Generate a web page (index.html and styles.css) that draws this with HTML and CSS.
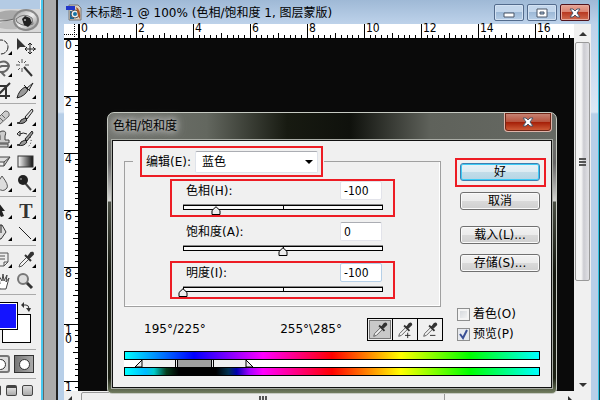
FILE: index.html
```html
<!DOCTYPE html>
<html lang="zh-CN">
  <head>
    <meta charset="utf-8" />
    <title>色相/饱和度</title>
    <link rel="stylesheet" href="styles.css">
  </head>

  <body>
    <svg class="defs" aria-hidden="true">
      <linearGradient id="fade"><stop offset="0" stop-color="#fff" /><stop offset="1" stop-color="#111" /></linearGradient>
      <linearGradient id="skin" x2="1" y2="1"><stop offset="0" stop-color="#999" /><stop offset=".5" stop-color="#eee" /><stop offset="1" stop-color="#888" /></linearGradient>
      <symbol id="dropper" viewBox="0 0 20 20">
        <path d="M3 17l1-3 7-7 2 2-7 7z" fill="#f4f4f4" stroke="#555" />
        <path d="M9 5l6 6M12 7l3-4q2-1 2 1l-4 4z" fill="#444" stroke="#333" stroke-width="2" />
      </symbol>
    </svg>

    <aside class="toolbox">
      <div class="toolbox-cap"></div>
      <svg class="eye" viewBox="0 0 41 23">
        <rect width="41" height="23" fill="#d8d8d8" />
        <path d="M0 3Q8 0 20 2L14 10Q8 12 0 10z" fill="#aaa" />
        <path d="M0 14Q8 10 14 12L17 20Q8 21 0 19z" fill="#bbb" />
        <path d="M0 12Q7 12 14 10" fill="none" stroke="#666" />
        <ellipse cx="26" cy="11" rx="12" ry="10" fill="url(#skin)" stroke="#888" stroke-width="2" />
        <path d="M16 10q8-7 16-1l1 6q-8 4-16-2z" fill="#ccc" stroke="#777" />
        <path d="M22 10l3-3 5 2 2 5-4 4-4-2z" fill="#222" />
        <circle cx="25" cy="11" r="1" fill="#bbb" />
      </svg>
      <div class="tools">
        <button class="more" aria-label="套索"><svg viewBox="0 0 20 20"><circle cx="9" cy="10" r="7" fill="none" stroke="#222" stroke-dasharray="5 1" /></svg></button>
        <button aria-label="移动"><svg viewBox="0 0 20 20"><path d="M1 1v12l3-3h6z" fill="#333" /><path d="M14 6v11M9 12h11M12 8l2-2 2 2M12 15l2 2 2-2M11 10l-2 2 2 2M17 10l2 2-2 2" fill="none" stroke="#222" /></svg></button>
        <button class="more" aria-label="磁性套索"><svg viewBox="0 0 20 20"><path d="M6 4q9-4 11 3-2 7-9 6-4-4 2-6h6M9 13l4 4" fill="none" stroke="#666" stroke-width="2" /></svg></button>
        <button aria-label="魔棒"><svg viewBox="0 0 20 20"><path d="M8 8l8 9" stroke="#333" stroke-width="2" /><path d="M6 0v4M6 9v4M0 6h4M9 6h4M2 2l2 2M10 2L8 4M2 11l2-2" stroke="#555" /></svg></button>
        <button aria-label="裁剪"><svg viewBox="0 0 20 20"><path d="M6 1v14h12M2 5h12v13M5 15L18 2" fill="none" stroke="#333" stroke-width="2" /></svg></button>
        <button class="more" aria-label="切片"><svg viewBox="0 0 20 20"><path d="M1 17Q3 9 9 6l3 3q-3 6-11 8z" fill="#999" stroke="#222" /><path d="M8 4l6 6M11 7l6-5-4 7z" fill="#ddd" stroke="#222" /></svg></button>
      </div>
      <div class="tools">
        <button class="more" aria-label="修复画笔"><svg viewBox="0 0 20 20"><path d="M3 13L13 3q5 0 4 5L7 17q-5 1-4-4z" fill="#ccc" stroke="#666" /><path d="M7 9l4 4M10 7l3 3" stroke="#666" /></svg></button>
        <button class="more" aria-label="画笔"><svg viewBox="0 0 20 20"><path d="M9 9l7-8 1 2-6 8z" fill="#ddd" stroke="#222" /><path d="M1 15q4 0 4-3l4-2 2 2q-3 5-10 3z" fill="#888" stroke="#222" /></svg></button>
        <button class="more" aria-label="图章"><svg viewBox="0 0 20 20"><path d="M8 10V6q-2-5 3-5 4 0 2 5v4h4v3H4v-3zM5 14h11v3H5z" fill="#ccc" stroke="#444" /></svg></button>
        <button class="more" aria-label="历史画笔"><svg viewBox="0 0 20 20"><path d="M9 9l7-8 1 2-6 8zM1 15q4 0 4-3l4-2 2 2q-3 5-10 3z" fill="#999" stroke="#222" /><path d="M4 4q3-2 7 0M4 1v5l-3-2z" fill="none" stroke="#222" /><path d="M14 7q3 5-2 10" fill="none" stroke="#222" stroke-dasharray="1 2" /></svg></button>
        <button class="more" aria-label="橡皮擦"><svg viewBox="0 0 20 20"><path d="M3 10l5-5h10l-6 9H5zM12 14v-4H3M12 10l6-5" fill="#ddd" stroke="#444" /></svg></button>
        <button class="more" aria-label="渐变"><svg viewBox="0 0 20 20"><rect x="2" y="4" width="15" height="11" fill="url(#fade)" stroke="#333" /></svg></button>
        <button class="more" aria-label="模糊"><svg viewBox="0 0 20 20"><path d="M10 2q7 9 5 12-4 5-9 0-2-4 4-12z" fill="#ddd" stroke="#555" /></svg></button>
        <button class="more" aria-label="减淡"><svg viewBox="0 0 20 20"><path d="M9 9l6 7" stroke="#444" stroke-width="2" /><circle cx="7" cy="6" r="5" fill="#222" /><circle cx="5" cy="5" r="1" fill="#888" /></svg></button>
      </div>
      <div class="tools">
        <button class="more" aria-label="路径选择"><svg viewBox="0 0 20 20"><path d="M6 1l7 9h-3l2 5-3 1-3-5z" fill="#222" /></svg></button>
        <button class="more type-tool" aria-label="文字">T</button>
        <button class="more" aria-label="钢笔"><svg viewBox="0 0 20 20"><path d="M7 2h3l4 7-5 7H8L5 9z" fill="#ddd" stroke="#333" /><path d="M9 2v8" stroke="#222" /></svg></button>
        <button class="more" aria-label="直线"><svg viewBox="0 0 20 20"><path d="M3 4l12 12" stroke="#222" /></svg></button>
      </div>
      <div class="tools">
        <button class="more" aria-label="注释"><svg viewBox="0 0 20 20"><path d="M4 3h12v9l-4 4H4zM16 12h-4v4M6 6h7M6 9h7" fill="#eee" stroke="#555" /></svg></button>
        <button class="more" aria-label="吸管"><svg><use href="#dropper" /></svg></button>
        <button aria-label="抓手"><svg viewBox="0 0 20 20"><path d="M5 10l3 7h6l3-11-3 4 1-7-3 6-1-7-1 7-3-5 1 8z" fill="#fff" stroke="#444" /></svg></button>
        <button aria-label="缩放"><svg viewBox="0 0 20 20"><path d="M10 10l6 6" stroke="#333" stroke-width="3" /><circle cx="7" cy="7" r="5" fill="#ddd" stroke="#777" stroke-width="2" /></svg></button>
      </div>
      <div class="swatches">
        <span class="back-color"></span>
        <span class="fore-color"></span>
        <svg class="swap" viewBox="0 0 10 10"><path d="M2 3h3q3 0 3 4" fill="none" stroke="#333" /><path d="M0 3l3-3v6zM5 6h5L8 10z" fill="#333" /></svg>
      </div>
      <div class="modes">
        <button class="mode on" aria-label="标准模式"><i></i></button>
        <button class="mode quick" aria-label="快速蒙版"><i></i></button>
      </div>
      <div class="screens">
        <button class="screen on" aria-label="标准屏幕"></button>
        <button class="screen bar" aria-label="带菜单栏全屏"></button>
        <button class="screen" aria-label="全屏"></button>
      </div>
    </aside>

    <main class="document">
      <header class="doc-title">
        <svg class="doc-icon" viewBox="0 0 17 17">
          <path d="M3 1h9l3 3v12H3z" fill="#ddd0c0" stroke="#777" />
          <path d="M4 7h4v8H4z" fill="#19699b" />
          <circle cx="9" cy="10" r="4" fill="#eee" stroke="#555" />
          <circle cx="9" cy="10" r="2" fill="#1573a5" />
          <path d="M10 3q5 2 4 12l-2-3z" fill="#a65729" />
          <path d="M0 2h9v4H0z" fill="#2136c9" />
        </svg>
        <h1>未标题-1 @ 100% (色相/饱和度 1, 图层蒙版)</h1>
        <button class="win-btn" aria-label="最小化"><svg viewBox="0 0 12 10"><path d="M1 5h10v4H1z" fill="#fff" stroke="#4b5769" /></svg></button>
        <button class="win-btn" aria-label="最大化"><svg viewBox="0 0 12 10"><path d="M1 1h10v8H1zM4 4v2h4V4z" fill="#fff" fill-rule="evenodd" stroke="#4b5769" /></svg></button>
        <button class="win-btn close" aria-label="关闭"><svg viewBox="0 0 12 10"><path d="M1 1h3l2 2 2-2h3L8 5l3 4H8L6 7 4 9H1l3-4z" fill="#fff" stroke="#4b5769" /></svg></button>
      </header>
      <div class="workspace">
        <div class="corner"></div>
        <div class="ruler across" data-units="9"></div>
        <div class="ruler down" data-units="7"></div>
        <div class="canvas"></div>
        <div class="scroll-v">
          <span class="arrow up"></span>
          <div class="thumb"><i></i><i></i><i></i></div>
          <span class="arrow down-arrow"></span>
        </div>
        <div class="scroll-h">
          <span class="arrow left"></span>
          <div class="thumb"><i></i><i></i><i></i></div>
          <span class="arrow right"></span>
        </div>
      </div>
    </main>

    <form class="dialog">
      <header class="dialog-title">
        <h2>色相/饱和度</h2>
        <button type="button" class="dialog-close" aria-label="关闭"><svg viewBox="0 0 12 10"><path d="M1 1h3l2 2 2-2h3L8 5l3 4H8L6 7 4 9H1l3-4z" fill="#fff" stroke="#4b5769" /></svg></button>
      </header>
      <div class="dialog-body">
        <fieldset>
          <legend>
            <span class="edit marked">
              <label for="channel">编辑(E):</label>
              <select id="channel"><option>蓝色</option></select>
            </span>
          </legend>
          <div class="row marked">
            <label for="hue">色相(H):</label>
            <input type="text" id="hue" value="-100" />
            <input type="range" aria-label="色相" min="-150" max="150" value="-100" />
          </div>
          <div class="row">
            <label for="sat">饱和度(A):</label>
            <input type="text" id="sat" value="0" />
            <input type="range" aria-label="饱和度" min="-100" max="100" value="0" />
          </div>
          <div class="row marked">
            <label for="light">明度(I):</label>
            <input type="text" id="light" class="focus" value="-100" />
            <input type="range" aria-label="明度" min="-100" max="100" value="-100" />
          </div>
        </fieldset>

        <div class="actions">
          <div class="ok marked"><button type="button" class="btn default">好</button></div>
          <button type="button" class="btn">取消</button>
          <button type="button" class="btn load">载入(L)...</button>
          <button type="button" class="btn">存储(S)...</button>
        </div>

        <div class="readout">
          <span>195°/225°</span>
          <span>255°\285°</span>
          <div class="droppers">
            <button type="button" class="on" aria-label="吸管"><svg><use href="#dropper" /></svg></button>
            <button type="button" aria-label="添加到取样"><svg viewBox="0 0 20 20"><use href="#dropper" /><path d="M10 16h6M13 13v6" stroke="#222" /></svg></button>
            <button type="button" aria-label="从取样减去"><svg viewBox="0 0 20 20"><use href="#dropper" /><path d="M10 16h6" stroke="#222" /></svg></button>
          </div>
        </div>

        <div class="checks">
          <label><input type="checkbox" />着色(O)</label>
          <label><input type="checkbox" checked />预览(P)</label>
        </div>

        <div class="spectrum">
          <div class="hues"></div>
          <svg class="handles" viewBox="0 0 130 7">
            <path d="M19 0h103v7H19z" fill="#f0f0f0" />
            <path d="M54 0h33v7H54z" fill="#a0a0a0" />
            <path d="M11 7l7-7v7zM122 0l7 7h-7z" fill="#eee" stroke="#000" />
            <path d="M51 0h1v7h-1zM53 0h1v7h-1zM87 0h1v7h-1zM89 0h1v7h-1z" />
          </svg>
          <div class="hues shifted"></div>
        </div>
      </div>
    </form>

    <script>
      // ten ticks to a unit, each unit stands for 2 cm
      document.querySelectorAll(".ruler").forEach((ruler) => {
        for (let i = 0; i < ruler.dataset.units; i++) {
          const unit = document.createElement("div");
          unit.className = "unit";
          for (let t = 0; t < 10; t++) {
            unit.appendChild(document.createElement("i"));
          }
          const label = document.createElement("span");
          label.textContent = i * 2;
          unit.appendChild(label);
          ruler.appendChild(unit);
        }
      });
    </script>
  </body>
</html>
```
FILE: styles.css
```css
* {
  box-sizing: border-box;
}
body {
  margin: 0;
  height: 100vh;
  display: flex;
  position: relative;
  overflow: hidden;
  background: #ababab;
  color: #000;
  font: 12px/16px "DejaVu Sans", "Noto Sans CJK SC", sans-serif;
}
button,
input,
select {
  font: inherit;
  color: inherit;
  margin: 0;
  padding: 0;
}
svg {
  display: block;
}
.defs {
  position: absolute;
  width: 0;
  height: 0;
}

/* toolbox */
.toolbox {
  flex: none;
  width: 44px;
  margin-right: 12px;
  overflow: hidden;
  background: #efefef;
  border-right: 1px solid #666;
  box-shadow: inset -2px 0 #45c8f0;
}
.toolbox-cap {
  height: 9px;
  margin-right: 3px;
  background: #b4cbe4;
}
.eye {
  width: 41px;
  height: 24px;
  border-bottom: 1px solid #999;
}
.tools {
  display: grid;
  grid-template-columns: 24px 24px;
  grid-auto-rows: 22px;
  margin: 3px 7px 0 -10px;
  padding-bottom: 1px;
  border-bottom: 1px solid #aaa;
}
.tools button {
  position: relative;
  border: 0;
  background: none;
}
.tools svg {
  width: 20px;
  height: 20px;
  margin: 1px 2px;
}
.tools .more::after {
  content: "";
  position: absolute;
  right: 2px;
  bottom: 3px;
  border: 2px solid #000;
  border-top-color: transparent;
  border-left-color: transparent;
}
.tools .type-tool {
  font: bold 20px/20px "Liberation Serif", serif;
  color: #333;
}
.swatches {
  position: relative;
  height: 55px;
  margin-right: 7px;
  border-bottom: 1px solid #aaa;
}
.fore-color,
.back-color {
  position: absolute;
  border: 1px solid #000;
}
.fore-color {
  left: -11px;
  top: 7px;
  width: 29px;
  height: 28px;
  background: #1414ff;
  box-shadow: inset 0 0 0 1px #fff;
}
.back-color {
  left: 2px;
  top: 19px;
  width: 29px;
  height: 29px;
  background: #fff;
}
.swap {
  position: absolute;
  left: 21px;
  top: 7px;
  width: 10px;
  height: 10px;
}
.modes {
  display: flex;
  gap: 4px;
  margin: 0 7px 0 -10px;
  padding: 5px 0;
  border-bottom: 1px solid #aaa;
}
.mode {
  display: grid;
  place-items: center;
  width: 20px;
  height: 18px;
  border: 2px solid #777;
  border-radius: 3px;
  background: #ddd;
}
.mode.quick {
  border: 1px solid #333;
  border-radius: 0;
  background: linear-gradient(90deg, #777, #aaa);
}
.mode i {
  width: 11px;
  height: 11px;
  border: 1px solid #333;
  border-radius: 50%;
  background: #fff;
}
.screens {
  display: flex;
  gap: 5px;
  margin-left: -10px;
  padding-top: 6px;
}
.screen {
  width: 11px;
  height: 11px;
  border: 1px solid #444;
  border-radius: 2px;
  background: linear-gradient(#ddd, #aaa);
}
.screen.bar {
  border-top-width: 3px;
}
.screen.on {
  background: #26588c;
}

/* document window */
.document {
  flex: 1;
  min-width: 0;
  display: flex;
  flex-direction: column;
  padding: 0 8px 0 6px;
  border-left: 2px solid #222;
  border-right: 1px solid #17464f;
  background: linear-gradient(#9fb9d6, #bdd2ea 24px, #dce8f5 112px, #b8cfe8 114px);
  box-shadow: inset -1px 0 #35c3e2;
}
.doc-title {
  height: 24px;
  display: flex;
  align-items: flex-start;
  gap: 3px;
  padding: 4px 1px 0 2px;
}
.doc-icon {
  width: 17px;
  height: 17px;
}
.doc-title h1 {
  flex: 1;
  margin: 0;
  font: inherit;
  line-height: 18px;
  white-space: nowrap;
}
.win-btn {
  display: grid;
  place-items: center;
  width: 30px;
  height: 17px;
  border: 1px solid #536b8c;
  border-radius: 2px;
  background: linear-gradient(#c4d7ec 50%, #9db9d7 50%, #b7cee7);
  box-shadow: inset 0 0 0 1px #d3e2f3;
}
.win-btn svg,
.dialog-close svg {
  width: 12px;
  height: 10px;
}
.win-btn.close {
  border-color: #50131c;
  background: linear-gradient(#e8a596, #d87f6c 50%, #b93a22 50%, #cf6b50);
  box-shadow: inset 0 0 0 1px #e5a99c;
}
.workspace {
  flex: 1;
  min-height: 0;
  display: grid;
  grid-template: 15px 1fr 9px / 15px 1fr 17px;
}
.corner {
  background: #fff;
  border-right: 1px solid #000;
  border-bottom: 1px solid #000;
  background-image:
    linear-gradient(90deg, #000 50%, transparent 50%),
    linear-gradient(#000 50%, transparent 50%);
  background-size: 2px 1px, 1px 2px;
  background-position: 0 10px, 10px 0;
  background-repeat: repeat-x, repeat-y;
}
.ruler {
  display: flex;
  background: #fff;
  font-family: "DejaVu Sans Condensed", sans-serif;
}
.unit {
  position: relative;
  flex: none;
  display: flex;
  justify-content: space-between;
}
.unit i {
  background: #000;
}
.unit span {
  position: absolute;
}
.across {
  min-width: 0;
  overflow-x: clip;
  border-bottom: 1px solid #000;
}
.across .unit {
  width: 57px;
  padding-right: 5px;
  align-items: flex-end;
}
.across i {
  width: 1px;
  height: 3px;
}
.across i:nth-child(6) {
  height: 5px;
}
.across i:first-child {
  height: 14px;
}
.across span {
  left: 2px;
  top: -2px;
  line-height: 12px;
}
.down {
  min-height: 0;
  overflow-y: clip;
  flex-direction: column;
  border-right: 1px solid #000;
}
.down .unit {
  flex-direction: column;
  height: 57px;
  padding-bottom: 5px;
  align-items: flex-end;
}
.down i {
  width: 3px;
  height: 1px;
}
.down i:nth-child(6) {
  width: 5px;
}
.down i:first-child {
  width: 14px;
}
.down span {
  left: 1px;
  top: 2px;
  width: 7px;
  line-height: 9px;
  word-break: break-all;
}
.canvas {
  background: #0a0a0a;
}
.scroll-v {
  grid-area: 1 / 3 / 3 / 4;
  display: flex;
  flex-direction: column;
  align-items: center;
  padding: 8px 1px 4px;
  background: #f0f0f0;
}
.scroll-h {
  grid-area: 3 / 1 / 4 / 4;
  display: flex;
  padding: 1px 19px 0 4px;
  overflow: hidden;
  background: #f0f0f0;
}
.thumb {
  display: flex;
  align-items: center;
  justify-content: center;
  gap: 1px;
  border: 1px solid #999;
  border-radius: 2px;
}
.thumb i {
  background: #555;
}
.scroll-v .thumb {
  flex-direction: column;
  width: 15px;
  height: 239px;
  margin: 6px 0 auto;
  background: linear-gradient(90deg, #f5f5f5 40%, #ccccd2 60%, #e2e2e6);
}
.scroll-v .thumb i {
  width: 7px;
  height: 2px;
}
.scroll-h .thumb {
  width: 364px;
  height: 15px;
  margin: 0 auto 0 9px;
  background: #eee;
}
.scroll-h .thumb i {
  width: 2px;
  height: 7px;
}
.arrow {
  flex: none;
  width: 0;
  height: 0;
  border: 4px solid transparent;
}
.up {
  border-top: 0;
  border-bottom-color: #333;
}
.down-arrow {
  border-bottom: 0;
  border-top-color: #333;
}
.left {
  margin-top: 4px;
  border-left: 0;
  border-right-color: #333;
}
.right {
  margin-top: 4px;
  border-right: 0;
  border-left-color: #333;
}

/* hue / saturation dialog */
.dialog {
  position: absolute;
  left: 107px;
  right: 43px;
  top: 112px;
  padding: 0 3px 4px;
  border: 1px solid #c6cac2;
  border-radius: 7px 7px 5px 5px;
  background:
    linear-gradient(90deg, #72746f, #63675f 22%, #171a11 40%, #0f110c 54%, #5f625b 72%, #666963) 0 0 / 100% 28px no-repeat,
    linear-gradient(#74766f, #666 50px, #d5d5d3 88px, #4a4e44 89px, #14170f 160px, #1c2014 265px, #727d60);
}
.dialog-title {
  display: flex;
  justify-content: space-between;
  height: 26px;
  padding: 0 1px 0 2px;
}
.dialog-title h2 {
  margin: 5px 0;
  font: inherit;
  text-shadow: 0 0 6px #ccc, 0 0 8px #ccc, 0 0 12px #bbb;
}
.dialog-close {
  display: grid;
  place-items: center;
  width: 48px;
  height: 19px;
  border: 1px solid #e0b5aa;
  border-top: 0;
  border-radius: 0 0 4px 4px;
  background: linear-gradient(#c98778, #b7543f 48%, #a31d06 50%, #d2613c);
  box-shadow: inset 0 0 0 1px #702718;
}
.dialog-body {
  display: grid;
  grid-template-columns: 1fr 80px;
  column-gap: 19px;
  padding: 5px 11px 11px;
  border: 1px solid #111;
  outline: 1px solid #a9aca5;
  margin: 1px;
  background: #f0f0f0;
}
.marked {
  border-color: #ed1c24 !important;
}
fieldset {
  min-width: 0;
  margin: 0;
  padding: 2px 45px 7px;
  border: 1px solid #a0a0a0;
  box-shadow: inset -1px -1px #fff;
}
legend {
  margin-left: -37px;
  padding: 0 1px 0 7px;
}
.edit {
  display: flex;
  align-items: center;
  justify-content: space-between;
  width: 183px;
  height: 31px;
  padding: 0 3px 0 4px;
  border: 2px solid;
  background: #f0f0f0;
}
.edit select {
  appearance: none;
  width: 123px;
  height: 22px;
  padding: 0 6px;
  border: 1px solid #dfe3ea;
  border-top-color: #abadb3;
  border-radius: 2px;
  background: #fff url("data:image/svg+xml,%3Csvg xmlns='http://www.w3.org/2000/svg' width='8' height='4'%3E%3Cpath d='M0 0h8L4 4z'/%3E%3C/svg%3E") no-repeat right 4px center;
}
.row {
  display: flex;
  flex-wrap: wrap;
  align-items: center;
  justify-content: space-between;
  height: 38px;
  margin-bottom: 3px;
  border: 2px solid transparent;
}
.row:last-child {
  margin-bottom: 0;
}
.row label {
  margin-left: 14px;
}
.row input[type="text"] {
  width: 42px;
  height: 19px;
  margin-right: 11px;
  padding: 0 3px;
  border: 1px solid #e2e3ea;
  border-top-color: #abadb3;
  border-radius: 2px;
  background: #fff;
  font-family: "DejaVu Sans Condensed", sans-serif;
}
.row.marked input[type="text"] {
  border-top-color: #e2e3ea;
}
.row input.focus {
  border-color: #b5cfe7 !important;
}
input[type="range"] {
  appearance: none;
  width: 210px;
  height: 12px;
  margin: 2px 0 0 6px;
  background:
    linear-gradient(#000, #000) center 2px / 1px 4px no-repeat,
    linear-gradient(#fafafa, #fafafa) center 3px / 198px 3px no-repeat,
    linear-gradient(#000, #000) center 2px / 200px 5px no-repeat,
    linear-gradient(#888, #888) center 1px / 200px 1px no-repeat;
}
input[type="range"]::-webkit-slider-thumb {
  appearance: none;
  width: 10px;
  height: 9px;
  margin-top: 3px;
  background: url("data:image/svg+xml,%3Csvg xmlns='http://www.w3.org/2000/svg' width='10' height='9'%3E%3Cpath d='M1 4.5L5 .7l4 3.8v4H1z' fill='%23eee' stroke='%23000'/%3E%3C/svg%3E");
}
.actions {
  display: flex;
  flex-direction: column;
  align-items: center;
  padding-top: 12px;
}
.ok {
  margin: 0 -6px 5px -5px;
  padding: 3px 4px 4px 3px;
  border: 2px solid;
}
.btn {
  width: 80px;
  height: 18px;
  margin-bottom: 10px;
  border: 1px solid #707070;
  border-radius: 3px;
  background: linear-gradient(#f2f2f2, #ebebeb 50%, #dadada 50%, #cfcfcf);
  box-shadow: inset 0 0 0 1px #fafafa;
  line-height: 14px;
}
.btn + .btn.load {
  margin-top: 6px;
}
.btn.default {
  display: block;
  margin: 0;
  border-color: #3c7fb1;
  background: linear-gradient(#e8f2f7, #dcebf2 50%, #c2dde9 50%, #b5d5e4);
  box-shadow: inset 0 0 0 1px #3ecbf5;
}
.readout {
  display: flex;
  align-items: flex-end;
  padding: 0 0 0 20px;
}
.readout span {
  flex: 1;
  margin-bottom: 4px;
}
.readout span + span {
  flex: none;
  margin-right: 25px;
}
.droppers {
  display: flex;
  height: 23px;
  margin-right: -2px;
  border: 1px solid #000;
  border-right: 0;
}
.droppers button {
  display: grid;
  place-items: center;
  width: 25px;
  border: 0;
  border-right: 1px solid #000;
  background: #f0f0f0;
}
.droppers .on {
  background: #c9c9c9;
  box-shadow: inset 0 0 0 1px #eee, inset 0 0 0 2px #777;
}
.droppers svg {
  width: 18px;
  height: 18px;
}
.checks {
  margin-left: -3px;
}
.checks label {
  display: flex;
  align-items: center;
  gap: 3px;
  height: 14px;
  margin-bottom: 6px;
  white-space: nowrap;
}
.checks label:last-child {
  margin-bottom: 0;
}
.checks input {
  appearance: none;
  width: 13px;
  height: 13px;
  border: 1px solid #8e8f8f;
  background: linear-gradient(135deg, #cfd3d8, #f8f8f8) padding-box;
  box-shadow: inset 0 0 0 2px #f4f4f4;
}
.checks input:checked {
  background: url("data:image/svg+xml,%3Csvg xmlns='http://www.w3.org/2000/svg' width='11' height='11'%3E%3Cpath d='M2 5l3 4 4-8' fill='none' stroke='%233a4f95' stroke-width='2'/%3E%3C/svg%3E"), #e6e9ee;
  box-shadow: none;
}
.spectrum {
  grid-column: 1 / -1;
  margin-top: 10px;
  background: #fff;
}
.hues {
  height: 9px;
  border: 1px solid #000;
  background: linear-gradient(90deg, #0ff, #00f, #f0f, #f00, #ff0, #0f0, #0ff);
}
.hues.shifted {
  background: linear-gradient(90deg, #0ff, #0bf 5%, #0cc 7%, #063c1c 10%, #000 13%, #000 22%, #003050 25%, #0000b0 27%, #a000ff 30%, #f0f 33.3%, #f00 50%, #ff0 66.6%, #0f0 83.3%, #0ff);
}
.handles {
  width: 130px;
  height: 7px;
}
```
